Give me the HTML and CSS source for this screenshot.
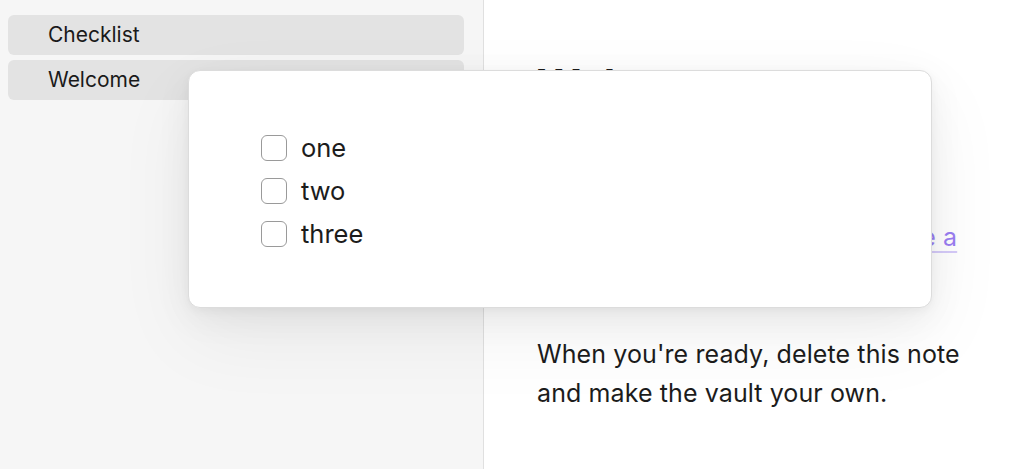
FILE: index.html
```html
<!DOCTYPE html>
<html lang="en">
  <head>
    <meta charset="UTF-8" />
    <meta name="viewport" content="width=device-width, initial-scale=1.0" />
    <title>Welcome</title>
    <link rel="stylesheet" href="styles.css">
  </head>
  <body>
    <div class="app">
      <div class="sidebar">
        <div class="nav-item">Checklist</div>
        <div class="nav-item">Welcome</div>
      </div>
      <div class="main">
        <div class="note">
          <h1 class="title">Welcome</h1>
          <p>This is your new <em>vault</em>.</p>
          <p>Make a note of something, <a href="javascript:;" class="link">create a link</a>, or try <a href="javascript:;" class="link">the Importer</a>!</p>
          <p>When you're ready, delete this note and make the vault your own.</p>
        </div>
      </div>
    </div>

    <!-- popup over the note -->
    <div class="modal">
      <ul class="checklist">
        <li><span class="box"></span>one</li>
        <li><span class="box"></span>two</li>
        <li><span class="box"></span>three</li>
      </ul>
    </div>
  </body>
</html>
```

FILE: styles.css
```css
* {
  margin: 0;
  padding: 0;
  box-sizing: border-box;
}
html,
body {
  height: 100%;
}
body {
  font-family: Inter, "Noto Sans", sans-serif;
  color: #1c1c1c;
  background: #fff;
  overflow: hidden;
}
.app {
  display: flex;
  height: 100%;
}
.sidebar {
  width: 484px;
  flex-shrink: 0;
  background: #f6f6f6;
  border-right: 1px solid #e0e0e0;
  padding: 15px 19px 0 8px;
  display: flex;
  flex-direction: column;
  gap: 5px;
}
.nav-item {
  height: 40px;
  line-height: 40px;
  padding-left: 40px;
  border-radius: 6px;
  background: #e3e3e3;
  font-size: 21px;
  color: #1a1a1a;
}
.main {
  flex: 1;
  background: #fff;
}
.note {
  width: 440px;
  margin-left: 53px;
  padding-top: 60px;
  font-size: 25px;
  letter-spacing: 0.1px;
  line-height: 39px;
}
.note .title {
  font-size: 42px;
  line-height: 50px;
  font-weight: 700;
  margin-bottom: 30px;
}
.note p {
  margin-bottom: 39px;
}
.link {
  color: #9b7ef2;
  text-decoration: underline;
  text-decoration-color: #d6cbf9;
  text-decoration-thickness: 2px;
  text-underline-offset: 5px;
}
.modal {
  position: absolute;
  left: 188px;
  top: 70px;
  width: 744px;
  height: 238px;
  background: #fff;
  border: 1px solid #dcdcdc;
  border-radius: 12px;
  box-shadow: 0 3px 10px rgba(0, 0, 0, 0.04), 0 10px 36px rgba(0, 0, 0, 0.06), 0 28px 80px rgba(0, 0, 0, 0.06);
  padding: 55px 72px;
}
.checklist {
  list-style: none;
}
.checklist li {
  display: flex;
  align-items: center;
  height: 43px;
  font-size: 25.5px;
}
.checklist .box {
  width: 26px;
  height: 26px;
  border: 1.5px solid #9a9a9a;
  border-radius: 6px;
  margin-right: 14px;
}
```
